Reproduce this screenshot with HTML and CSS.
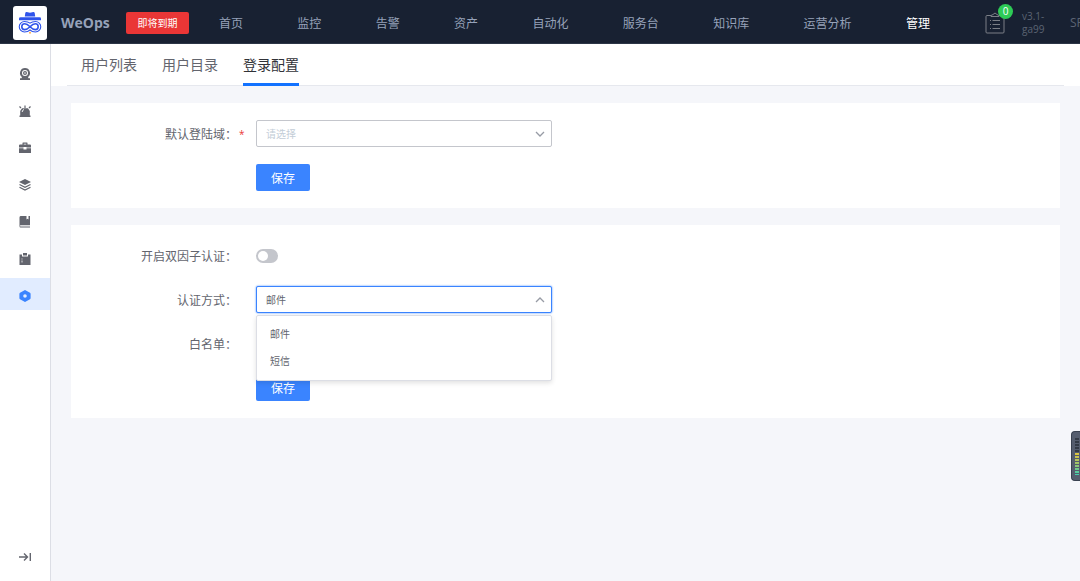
FILE: index.html
```html
<!DOCTYPE html>
<html lang="zh-CN">
<head>
  <meta charset="UTF-8">
  <meta name="viewport" content="width=device-width, initial-scale=1.0">
  <title>WeOps</title>
  <link rel="stylesheet" href="styles.css">
</head>
<body>
  <header class="header">
    <a class="logo" href="#" aria-label="WeOps">
      <svg width="24" height="24" viewBox="0 0 24 24">
        <path d="M6.800 5.500 7.300 2Q7.500.800 8.700.900L12 1.800 15.300.900Q16.500.800 16.700 2L17.200 5.500Z" fill="#2f54eb"/>
        <path d="M1 9.200V7.500Q1 6.300 2.500 6.300H21.500Q23 6.300 23 7.500V9.200Z" fill="#2f54eb"/>
        <path d="M12 12.200Q10 10.500 6.500 10.500A5.200 5.200 0 0 0 6.500 21Q10 21 12 19 14 21 17.500 21A5.200 5.200 0 0 0 17.500 10.500Q14 10.500 12 12.200Z" fill="none" stroke="#2f54eb" stroke-width="1.100"/>
        <path d="M12 15.700C10 13.700 8.600 12.800 6.700 12.800A2.900 2.900 0 0 0 6.700 18.600C8.600 18.600 10 17.700 12 15.700 14 13.700 15.400 12.800 17.300 12.800A2.900 2.900 0 0 1 17.300 18.600C15.400 18.600 14 17.700 12 15.700Z" fill="none" stroke="#2f54eb" stroke-width="1.600"/>
        <circle cx="12" cy="21.800" r="1" fill="#ffab4a"/>
      </svg>
    </a>
    <span class="brand">WeOps</span>
    <button class="expire" type="button">即将到期</button>
    <nav class="nav">
      <a href="#">首页</a>
      <a href="#">监控</a>
      <a href="#">告警</a>
      <a href="#">资产</a>
      <a href="#">自动化</a>
      <a href="#">服务台</a>
      <a href="#">知识库</a>
      <a href="#">运营分析</a>
      <a class="active" href="#">管理</a>
    </nav>
    <a class="todo" href="#" aria-label="待办">
      <svg width="20" height="24" viewBox="0 0 20 24" fill="none" stroke="#7b7f86">
        <path d="M6 4.500H2Q1 4.500 1 5.500V21Q1 22 2 22H18Q19 22 19 21V5.500Q19 4.500 18 4.500H14M6 5.500V4.500L8 3.500Q10 .500 12 3.500L14 4.500V5.500Z"/>
        <path d="M5 9.500H6M7.500 9.500H15M5 13.500H6M7.500 13.500H15M5 17.500H6M7.500 17.500H15"/>
      </svg>
      <span class="badge">0</span>
    </a>
    <span class="version">v3.1-ga99</span>
    <span class="user">SP</span>
  </header>

  <div class="layout">
    <aside class="sidebar">
      <a class="side-item" href="#" aria-label="监控">
        <svg width="12" height="12" viewBox="0 0 12 12"><path fill-rule="evenodd" d="M6 0a5 5 0 0 1 3 9l.500 1.300H11V12H1v-1.700h1.500L3 9a5 5 0 0 1 3-9Zm0 2a3 3 0 1 0 0 6 3 3 0 0 0 0-6Z"/><path fill-rule="evenodd" d="M6 3a2 2 0 1 1 0 4 2 2 0 0 1 0-4Zm0 1.200a.800.800 0 1 0 0 1.600.800.800 0 0 0 0-1.600Z"/></svg>
      </a>
      <a class="side-item" href="#" aria-label="告警">
        <svg width="12" height="12" viewBox="0 0 12 12"><path d="M1.200 10.500V6L3 3.200H9L10.800 6V10.500H11.500V12H.500V10.500Z"/><path d="M6 .500V3M.500 1.500 2 3M11.500 1.500 10 3" stroke="#63656e" stroke-width="1.200"/><path d="M3.200 7Q3.200 5 5 4.500" fill="none" stroke="#fff" stroke-width=".900"/></svg>
      </a>
      <a class="side-item" href="#" aria-label="资产">
        <svg width="12" height="12" viewBox="0 0 12 12"><path d="M3.500 2.500V1Q3.500.500 4 .500H8Q8.500.500 8.500 1V2.500H11Q12 2.500 12 3.500V5.500H7.500V5H4.500V5.500H0V3.500Q0 2.500 1 2.500ZM4.700 2.500H7.300V1.700H4.700ZM0 6.200H4.500V7.500H7.500V6.200H12V11H0Z"/></svg>
      </a>
      <a class="side-item" href="#" aria-label="服务">
        <svg width="12" height="12" viewBox="0 0 12 12"><path d="M6 0 12 3 6 6 0 3Z"/><path d="M.500 5.500 6 8.300 11.500 5.500M.500 8.200 6 11 11.500 8.200" fill="none" stroke="#63656e" stroke-width="1.200"/></svg>
      </a>
      <a class="side-item" href="#" aria-label="知识库">
        <svg width="12" height="12" viewBox="0 0 12 12"><path d="M1.500 0H7.500V3.500L8.500 2.800 9.500 3.500V0H11V9.200H1.500Q1 9.200 1 9.800T1.500 10.500H11V11.500H1.500Q.500 11.500.500 10V1.500Q.500 0 1.500 0Z"/></svg>
      </a>
      <a class="side-item" href="#" aria-label="报告">
        <svg width="12" height="12" viewBox="0 0 12 12"><path d="M.500 1.500H3V3.500H9V1.500H11.500V12H.500ZM4 0H8V2.500H4Z"/><path d="M3 5.500V6.500M3 7.500V9.500" stroke="#fff" stroke-width=".800"/></svg>
      </a>
      <a class="side-item active" href="#" aria-label="系统设置">
        <svg width="12" height="12" viewBox="0 0 12 12"><path fill-rule="evenodd" d="M6 0 11 2.800Q11.600 3.200 11.600 4V8Q11.600 8.800 11 9.200L6 12 1 9.200Q.400 8.800.400 8V4Q.400 3.200 1 2.800ZM6 4.200A1.800 1.800 0 1 0 6 7.800 1.800 1.800 0 0 0 6 4.200Z"/></svg>
      </a>
      <button class="collapse" type="button" aria-label="展开菜单">
        <svg width="14" height="10" viewBox="0 0 14 10" fill="none" stroke="#63656e" stroke-width="1.400"><path d="M1 5H9.500M6 1.500 9.500 5 6 8.500M12.300 1V9"/></svg>
      </button>
    </aside>

    <main class="main">
      <div class="tabs">
        <a href="#">用户列表</a>
        <a href="#">用户目录</a>
        <a class="active" href="#">登录配置</a>
      </div>

      <form class="panel">
        <div class="row">
          <label for="domain">默认登陆域：</label>
          <span class="mark">*</span>
          <div class="select">
            <select id="domain" class="empty">
              <option>请选择</option>
            </select>
            <svg class="arrow" width="10" height="6" viewBox="0 0 10 6"><path d="M1 1 5 5 9 1"/></svg>
          </div>
        </div>
        <div class="row actions">
          <button class="save" type="button">保存</button>
        </div>
      </form>

      <form class="panel">
        <div class="row">
          <label for="two-factor">开启双因子认证：</label>
          <span class="mark"></span>
          <input id="two-factor" class="switch" type="checkbox">
        </div>
        <div class="row">
          <label for="auth-type">认证方式：</label>
          <span class="mark"></span>
          <div class="select open">
            <select id="auth-type">
              <option>邮件</option>
              <option>短信</option>
            </select>
            <svg class="arrow" width="10" height="6" viewBox="0 0 10 6"><path d="M1 5 5 1 9 5"/></svg>
            <ul class="menu">
              <li>邮件</li>
              <li>短信</li>
            </ul>
          </div>
        </div>
        <div class="row">
          <label for="whitelist">白名单：</label>
          <span class="mark"></span>
          <input id="whitelist" class="text" type="text">
        </div>
        <div class="row actions">
          <button class="save" type="button">保存</button>
        </div>
      </form>
    </main>
  </div>

  <div class="meter"><span class="meter-off"></span><span class="meter-on"></span></div>
</body>
</html>
```
FILE: styles.css
```css
* {
  box-sizing: border-box;
}

body {
  margin: 0;
  min-height: 100vh;
  display: flex;
  flex-direction: column;
  overflow-x: hidden;
  background: #f5f6fa;
  color: #63656e;
  font-family: "Open Sans", "Noto Sans CJK SC", sans-serif;
  font-size: 12px;
}

a {
  color: inherit;
  text-decoration: none;
}

button,
input,
select {
  font-family: inherit;
}

/* 顶部导航 */
.header {
  display: flex;
  align-items: center;
  height: 44px;
  padding: 2px 0 0 13px;
  overflow: hidden;
  background: #182132;
  border-bottom: 1px solid #2c3546;
  color: #96a2b9;
}

.logo {
  flex: none;
  display: flex;
  align-items: center;
  justify-content: center;
  width: 34px;
  height: 34px;
  background: #fff;
  border-radius: 3px;
}

.brand {
  width: 49px;
  margin-left: 14px;
  font-size: 14px;
  font-weight: 700;
}

.expire {
  flex: none;
  width: 63px;
  height: 22px;
  margin-left: 16px;
  padding: 0;
  border: none;
  border-radius: 2px;
  background: #ea3636;
  color: #fff;
  font-size: 10px;
}

.nav {
  flex: 1;
  display: flex;
  justify-content: space-between;
  margin: 0 55px 0 30px;
  white-space: nowrap;
}

.nav .active {
  color: #fff;
}

.todo {
  flex: none;
  position: relative;
  display: flex;
}

.badge {
  position: absolute;
  top: -7px;
  right: -8px;
  width: 15px;
  height: 15px;
  border-radius: 50%;
  background: #2dcb56;
  color: #fff;
  font-size: 10px;
  line-height: 15px;
  text-align: center;
}

.version {
  flex: none;
  width: 30px;
  margin-left: 17px;
  color: #5c6473;
  font-size: 10px;
  line-height: 13px;
}

.user {
  flex: none;
  width: 10px;
  margin-left: 18px;
  color: #5c6473;
}

.layout {
  flex: 1;
  display: flex;
}

/* 侧边栏 */
.sidebar {
  flex: none;
  display: flex;
  flex-direction: column;
  gap: 5px;
  width: 51px;
  padding: 12px 0 14px;
  background: #fff;
  border-right: 1px solid #dcdee5;
}

.side-item {
  display: flex;
  align-items: center;
  justify-content: center;
  height: 32px;
  padding-top: 3px;
  fill: #63656e;
}

.side-item.active {
  background: #e1ecff;
  fill: #3a84ff;
}

.collapse {
  display: flex;
  justify-content: center;
  margin-top: auto;
  padding: 5px 0;
  border: none;
  background: none;
}

.main {
  flex: 1;
  min-width: 0;
}

.tabs {
  display: flex;
  gap: 25px;
  height: 42px;
  padding: 0 30px;
  background: linear-gradient(#e6e8ee, #e6e8ee) center bottom / calc(100% - 32px) 1px no-repeat #fff;
  font-size: 14px;
  line-height: 42px;
}

.tabs .active {
  border-bottom: 3px solid #1272ff;
  color: #313238;
}

/* 表单 */
.panel {
  display: flex;
  flex-direction: column;
  gap: 17px;
  margin: 17px 20px;
  padding: 17px 0;
  background: #fff;
}

.row {
  display: flex;
  align-items: center;
  height: 27px;
}

.row label {
  width: 166px;
  text-align: right;
}

.mark {
  width: 19px;
  padding-left: 2px;
  color: #ea3636;
  font-size: 10px;
}

.actions {
  padding-left: 185px;
}

.save {
  width: 54px;
  height: 27px;
  padding: 0;
  border: none;
  border-radius: 2px;
  background: #3a84ff;
  color: #fff;
  font-size: 12px;
}

.select {
  position: relative;
  width: 296px;
}

.select select,
.text {
  display: block;
  width: 296px;
  height: 27px;
  padding: 0 9px;
  border: 1px solid #c4c6cc;
  border-radius: 2px;
  appearance: none;
  background: #fff;
  color: #63656e;
  font-size: 10px;
}

.select .empty {
  color: #c3cdd7;
}

.select.open select {
  border-color: #3a84ff;
  box-shadow: 0 0 2px #3a84ff;
}

.arrow {
  position: absolute;
  top: 11px;
  right: 7px;
  fill: none;
  stroke: #979ba5;
  stroke-width: 1.3;
  pointer-events: none;
}

.menu {
  position: absolute;
  z-index: 1;
  top: 29px;
  left: 0;
  width: 100%;
  margin: 0;
  padding: 5px 0;
  border: 1px solid #dcdee5;
  border-radius: 2px;
  background: #fff;
  box-shadow: 0 2px 5px rgba(0, 0, 0, 0.12);
  list-style: none;
  font-size: 10px;
  line-height: 27px;
}

.menu li {
  padding: 0 13px;
}

.switch {
  position: relative;
  width: 22px;
  height: 14px;
  margin: 0;
  border-radius: 7px;
  appearance: none;
  background: #c4c6cc;
}

.switch::before {
  content: "";
  position: absolute;
  top: 2px;
  left: 2px;
  width: 10px;
  height: 10px;
  border-radius: 50%;
  background: #fff;
}

.switch:checked {
  background: #3a84ff;
}

.switch:checked::before {
  left: 10px;
}

/* 右侧悬浮指示条 */
.meter {
  position: fixed;
  top: 431px;
  right: 0;
  display: flex;
  flex-direction: column;
  width: 9px;
  height: 50px;
  padding: 6px 1px 5px 3px;
  border: 1px solid #394150;
  border-right: none;
  border-radius: 4px 0 0 4px;
  background: #555d6e;
}

.meter-off {
  height: 15px;
  background: repeating-linear-gradient(#333a46 0 2px, #555d6e 2px 3px);
}

.meter-on {
  flex: 1;
  background: repeating-linear-gradient(transparent 0 2px, #555d6e 2px 3px), linear-gradient(#e2c53c, #9cc46c, #3ecfb0);
}
```
